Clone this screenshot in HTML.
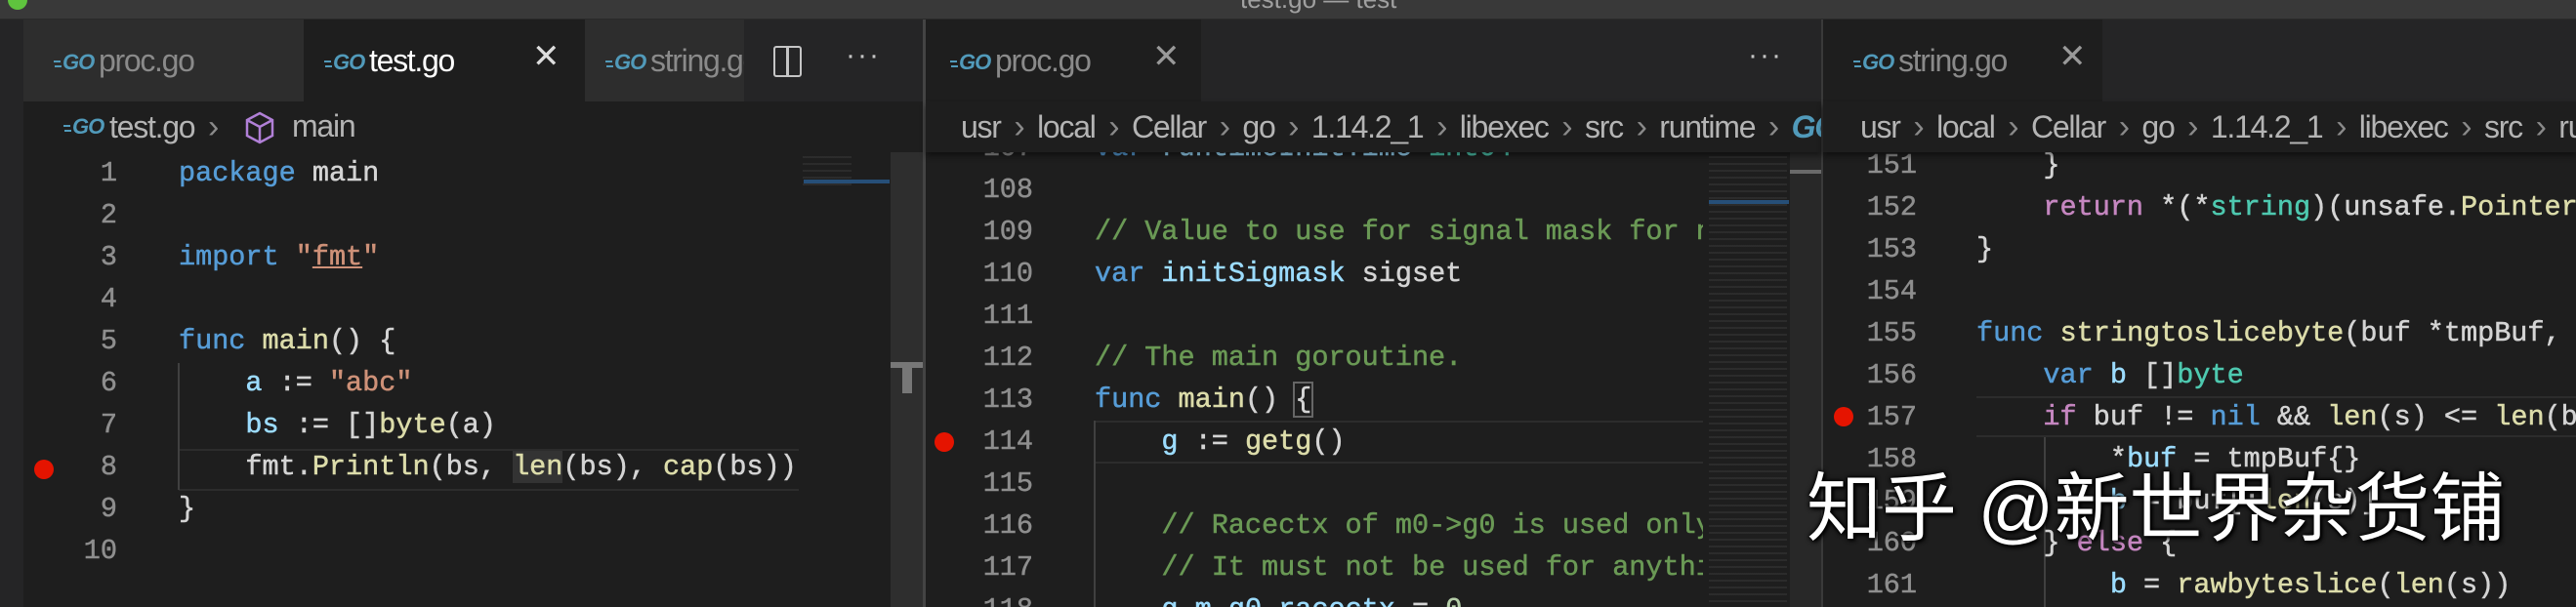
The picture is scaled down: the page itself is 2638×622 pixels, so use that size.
<!DOCTYPE html>
<html><head><meta charset="utf-8"><style>
*{margin:0;padding:0;box-sizing:border-box}
body{width:2638px;height:622px;background:#1e1e1e;position:relative;overflow:hidden;font-family:"Liberation Sans",sans-serif}
.abs{position:absolute}
.title{left:0;top:0;width:2638px;height:20px;background:#393939;border-bottom:1px solid #2a2a2a}
.tt{position:absolute;left:1270px;top:-16px;font-size:26px;color:#a0a0a0;white-space:nowrap}
.tab{position:absolute;top:20px;height:84px;font-size:32px;letter-spacing:-1.3px;color:#8a8a8a;white-space:nowrap;overflow:hidden}
.tab span.t{position:absolute;top:24px}
.go{position:absolute;top:31px;font-size:22px;font-weight:bold;font-style:italic;color:#519aba;letter-spacing:-1px}
.go:before{content:"";position:absolute;left:-9px;top:11px;width:7px;height:2px;background:#519aba;box-shadow:1px 5px 0 #519aba}
.x{position:absolute;top:18px;font-size:34px;color:#aaa;font-weight:300}
.bc{position:absolute;top:104px;height:52px;background:#1e1e1e;font-size:32px;letter-spacing:-1.25px;color:#b4b4b4;white-space:nowrap;overflow:hidden;box-shadow:0 4px 6px rgba(0,0,0,.45);z-index:3}
.bc span.c{color:#8a8a8a;padding:0 6px;font-size:34px}
.code{position:absolute;overflow:hidden;font-family:"Liberation Mono",monospace;font-size:28.5px;line-height:43px;color:#d4d4d4;white-space:pre;-webkit-text-stroke:0.5px currentColor}
.num{position:absolute;overflow:hidden;font-family:"Liberation Mono",monospace;font-size:28.5px;line-height:43px;color:#8e8e8e;text-align:right;white-space:pre;-webkit-text-stroke:0.5px currentColor}
.k{color:#569cd6}.f{color:#dcdcaa}.s{color:#ce9178}.c{color:#6a9955}.v{color:#9cdcfe}.ty{color:#4ec9b0}.p{color:#c586c0}
.bp{position:absolute;width:20px;height:20px;border-radius:50%;background:#e51400}
.hl{position:absolute;border-top:2px solid #2c2c2c;border-bottom:2px solid #2c2c2c}
.ig{position:absolute;width:2px;background:#404040}
.mm{position:absolute;background:repeating-linear-gradient(to bottom,rgba(140,140,140,.12) 0 2px,transparent 2px 7px)}
</style></head><body>
<div class="abs title"><div class="tt">test.go — test</div></div>
<div class="abs" style="left:8px;top:-10px;width:20px;height:20px;border-radius:50%;background:#5fc43e"></div>

<div class="abs" style="left:0;top:20px;width:24px;height:602px;background:#252526"></div>

<!-- LEFT PANE -->
<div class="abs" style="left:24px;top:20px;width:921px;height:84px;background:#252526"></div>
<div class="tab" style="left:24px;width:287px;background:#2d2d2d"><span class="go" style="left:40px">GO</span><span class="t" style="left:77px">proc.go</span></div>
<div class="tab" style="left:311px;width:288px;background:#1e1e1e;color:#fff"><span class="go" style="left:30px">GO</span><span class="t" style="left:67px">test.go</span><span class="x" style="left:234px;color:#ddd">✕</span></div>
<div class="tab" style="left:599px;width:163px;background:#2d2d2d"><span class="go" style="left:30px">GO</span><span class="t" style="left:67px">string.go</span></div>
<div class="abs" style="left:792px;top:47px;width:29px;height:32px;border:2.5px solid #c5c5c5;border-radius:3px"></div>
<div class="abs" style="left:805px;top:48px;width:2.5px;height:30px;background:#c5c5c5"></div>
<div class="abs" style="left:866px;top:40px;font-size:30px;color:#c5c5c5;letter-spacing:2px">···</div>

<div class="bc" style="left:24px;width:921px;box-shadow:none"><span class="go" style="left:50px;top:13px">GO</span><span style="position:absolute;left:88px;top:7px">test.go <span class="c">›</span></span>
<svg style="position:absolute;left:226px;top:10px" width="32" height="34" viewBox="0 0 32 34"><path d="M16 2 L29 9 L29 25 L16 32 L3 25 L3 9 Z M3 9 L16 16 L29 9 M16 16 L16 32" fill="none" stroke="#b180d7" stroke-width="2.5"/></svg>
<span style="position:absolute;left:275px;top:7px">main</span></div>

<div class="hl" style="left:183px;top:460px;width:635px;height:43px"></div>
<div class="ig" style="left:182px;top:372px;height:130px"></div>
<div class="num" style="left:24px;top:156px;width:96px;height:466px">  1
  2
  3
  4
  5
  6
  7
  8
  9
 10</div>
<div class="bp" style="left:35px;top:471px"></div>
<div class="code" style="left:183px;top:156px;width:635px;height:466px"><span class="k">package</span> main

<span class="k">import</span> <span class="s">"<u style="text-decoration-color:#ce9178">fmt</u>"</span>

<span class="k">func</span> <span class="f">main</span>() {
    <span class="v">a</span> := <span class="s">"abc"</span>
    <span class="v">bs</span> := []<span class="f">byte</span>(a)
    fmt.<span class="f">Println</span>(bs, <span class="f" style="background:#333">len</span>(bs), <span class="f">cap</span>(bs))
}
</div>
<div class="mm" style="left:822px;top:160px;width:50px;height:30px"></div>
<div class="abs" style="left:823px;top:184px;width:88px;height:4px;background:#264f78"></div>
<div class="abs" style="left:912px;top:156px;width:33px;height:466px;background:#2e2e2e"></div>
<div class="abs" style="left:912px;top:371px;width:33px;height:6px;background:#777"></div>
<div class="abs" style="left:924px;top:371px;width:10px;height:32px;background:#777"></div>

<div class="abs" style="left:945px;top:20px;width:3px;height:602px;background:#444"></div>

<!-- MIDDLE PANE -->
<div class="abs" style="left:948px;top:20px;width:917px;height:84px;background:#252526"></div>
<div class="tab" style="left:948px;width:282px;background:#1e1e1e"><span class="go" style="left:34px">GO</span><span class="t" style="left:71px">proc.go</span><span class="x" style="left:232px;color:#999">✕</span></div>
<div class="abs" style="left:1790px;top:40px;font-size:30px;color:#c5c5c5;letter-spacing:2px">···</div>
<div class="bc" style="left:948px;width:917px"><span style="position:absolute;left:36px;top:7px">usr <span class="c">›</span> local <span class="c">›</span> Cellar <span class="c">›</span> go <span class="c">›</span> 1.14.2_1 <span class="c">›</span> libexec <span class="c">›</span> src <span class="c">›</span> runtime <span class="c">›</span> <span style="color:#519aba;font-weight:bold;font-style:italic">GO</span></span></div>

<div class="hl" style="left:1121px;top:431px;width:623px;height:44px"></div>
<div class="ig" style="left:1120px;top:431px;height:191px"></div>
<div class="num" style="left:948px;top:130px;width:110px;height:492px">107
108
109
110
111
112
113
114
115
116
117
118</div>
<div class="bp" style="left:957px;top:443px"></div>
<div class="code" style="left:1121px;top:130px;width:623px;height:492px"><span class="k">var</span> <span class="v">runtimeInitTime</span> <span class="ty">int64</span>

<span class="c">// Value to use for signal mask for newly created M's.</span>
<span class="k">var</span> <span class="v">initSigmask</span> sigset

<span class="c">// The main goroutine.</span>
<span class="k">func</span> <span class="f">main</span>() <span style="outline:2px solid #666">{</span>
    <span class="v">g</span> := <span class="f">getg</span>()

    <span class="c">// Racectx of m0-&gt;g0 is used only as the parent of the main goroutine.</span>
    <span class="c">// It must not be used for anything else.</span>
    <span class="v">g</span>.<span class="v">m</span>.<span class="v">g0</span>.<span class="v">racectx</span> = <span style="color:#b5cea8">0</span></div>
<div class="mm" style="left:1750px;top:160px;width:80px;height:462px"></div>
<div class="abs" style="left:1750px;top:205px;width:82px;height:4px;background:#264f78"></div>
<div class="abs" style="left:1833px;top:156px;width:32px;height:466px;background:#282828"></div>
<div class="abs" style="left:1833px;top:174px;width:32px;height:4px;background:#6a6a6a"></div>

<div class="abs" style="left:1865px;top:20px;width:2px;height:602px;background:#3a3a3a"></div>

<!-- RIGHT PANE -->
<div class="abs" style="left:1867px;top:20px;width:771px;height:84px;background:#252526"></div>
<div class="tab" style="left:1867px;width:286px;background:#1e1e1e"><span class="go" style="left:40px">GO</span><span class="t" style="left:77px">string.go</span><span class="x" style="left:241px;color:#999">✕</span></div>
<div class="bc" style="left:1867px;width:771px"><span style="position:absolute;left:38px;top:7px">usr <span class="c">›</span> local <span class="c">›</span> Cellar <span class="c">›</span> go <span class="c">›</span> 1.14.2_1 <span class="c">›</span> libexec <span class="c">›</span> src <span class="c">›</span> runtime</span></div>

<div class="hl" style="left:2024px;top:406px;width:614px;height:42px"></div>
<div class="ig" style="left:2093px;top:448px;height:174px"></div>
<div class="num" style="left:1867px;top:148px;width:96px;height:474px">151
152
153
154
155
156
157
158
159
160
161</div>
<div class="bp" style="left:1878px;top:417px"></div>
<div class="code" style="left:2024px;top:148px;width:614px;height:474px">    }
    <span class="p">return</span> *(*<span class="ty">string</span>)(unsafe.<span class="f">Pointer</span>(&amp;b))
}

<span class="k">func</span> <span class="f">stringtoslicebyte</span>(buf *tmpBuf, s <span class="ty">string</span>) []<span class="ty">byte</span> {
    <span class="k">var</span> <span class="v">b</span> []<span class="ty">byte</span>
    <span class="p">if</span> buf != <span class="k">nil</span> &amp;&amp; <span class="f">len</span>(s) &lt;= <span class="f">len</span>(buf) {
        *<span class="v">buf</span> = tmpBuf{}
        <span class="v">b</span> = buf[:<span class="f">len</span>(s)]
    } <span class="p">else</span> {
        <span class="v">b</span> = <span class="f">rawbyteslice</span>(<span class="f">len</span>(s))</div>

<div class="abs" style="left:1850px;top:460px;font-family:'Liberation Sans','Noto Sans CJK SC',sans-serif;font-size:77px;color:#fff;white-space:nowrap;text-shadow:0 0 6px #000,0 0 3px #000,2px 2px 4px #000;z-index:5">知乎 @新世界杂货铺</div>
</body></html>
